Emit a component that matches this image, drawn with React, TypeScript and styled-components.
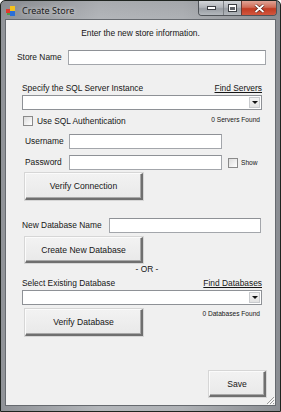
import React from 'react';
import styled, { createGlobalStyle } from 'styled-components';

const GlobalStyle = createGlobalStyle`
  html, body { margin: 0; padding: 0; background: #ffffff; }
  body { font-family: "Liberation Sans", Arial, sans-serif; }
  #root { width: 281px; height: 412px; }
`;

const Window = styled.div`
  width: 281px;
  height: 412px;
  box-sizing: border-box;
  display: flex;
  flex-direction: column;
  border: 1px solid #1f2420;
  border-radius: 5px 5px 0 0;
  padding: 0 4px 5px 4px;
  background: linear-gradient(180deg, rgba(0, 0, 0, 0.06) 0px, rgba(0, 0, 0, 0) 18px),
    linear-gradient(90deg, #8f9297 0%, #b3b6ba 35%, #aeb1b5 65%, #8a8d92 100%);
  overflow: hidden;
`;

const TitleBar = styled.div`
  height: 18px;
  display: flex;
  align-items: flex-start;
`;

const TitleIcon = styled.svg`
  width: 10px;
  height: 10px;
  margin: 5px 0 0 1px;
`;

const TitleText = styled.span`
  margin: 4px 0 0 6px;
  font-family: "Noto Sans", "Open Sans", sans-serif;
  font-size: 9px;
  line-height: 11px;
  color: #1a1a1a;
  text-shadow: 0 0 4px rgba(255, 255, 255, 0.8);
`;

const CaptionGroup = styled.div`
  margin-left: auto;
  margin-right: -1px;
  display: flex;
  height: 14px;
  border: 1px solid #4f5358;
  border-top: none;
  border-radius: 0 0 4px 4px;
  overflow: hidden;
`;

const CaptionButton = styled.div<{ $w: number; $close?: boolean }>`
  width: ${(p) => p.$w}px;
  height: 100%;
  display: flex;
  align-items: center;
  justify-content: center;
  box-sizing: border-box;
  border-left: ${(p) => (p.$close ? '1px solid #6b3a33' : '1px solid #7b7f84')};
  background: ${(p) =>
    p.$close
      ? 'linear-gradient(180deg, #e0a496 0%, #cf6b56 45%, #c13b22 55%, #d2573f 100%)'
      : 'linear-gradient(180deg, #d3d6da 0%, #b1b5ba 45%, #989da3 55%, #b4b8bd 100%)'};
  &:first-child { border-left: none; }
`;

const Client = styled.div`
  flex: 1;
  position: relative;
  display: flex;
  flex-direction: column;
  background: #f0f0f0;
  border: 1px solid #666a6f;
  padding: 0 13px 0 16px;
  color: #161616;
  font-size: 8.4px;
`;

const Header = styled.div`
  margin-top: 7px;
  height: 12px;
  line-height: 12px;
  text-align: center;
  margin-left: -16px;
  margin-right: -13px;
`;

const Row = styled.div<{ $mt: number; $ml?: number; $mr?: number; $h?: number }>`
  display: flex;
  align-items: center;
  margin-top: ${(p) => p.$mt}px;
  margin-left: ${(p) => p.$ml ?? 0}px;
  margin-right: ${(p) => p.$mr ?? 0}px;
  height: ${(p) => p.$h ?? 15}px;
`;

const Label = styled.span<{ $w?: number }>`
  ${(p) => (p.$w ? `width: ${p.$w}px; flex: none;` : '')}
  white-space: nowrap;
  line-height: 11px;
`;

const LinkText = styled.span`
  margin-left: auto;
  text-decoration: underline;
  line-height: 11px;
`;

const TextBox = styled.div<{ $w?: number }>`
  height: 15px;
  box-sizing: border-box;
  background: #ffffff;
  border: 1px solid #a3a6ab;
  border-top-color: #8e9196;
  ${(p) => (p.$w ? `width: ${p.$w}px; flex: none;` : 'flex: 1;')}
`;

const Combo = styled.div`
  flex: 1;
  height: 15px;
  box-sizing: border-box;
  background: #ffffff;
  border: 1px solid #8e9196;
  display: flex;
  justify-content: flex-end;
  padding: 1px;
`;

const ComboArrow = styled.div`
  width: 11px;
  box-sizing: border-box;
  border: 1px solid #c9cbce;
  background: linear-gradient(180deg, #f4f4f4, #e2e2e2);
  display: flex;
  align-items: center;
  justify-content: center;
  &::after {
    content: '';
    border-left: 3px solid transparent;
    border-right: 3px solid transparent;
    border-top: 3px solid #111;
  }
`;

const CheckBox = styled.span<{ $ml?: number }>`
  width: 10px;
  height: 10px;
  box-sizing: border-box;
  flex: none;
  margin-left: ${(p) => p.$ml ?? 0}px;
  border: 1px solid #8a8a8a;
  background: linear-gradient(135deg, #dcdcdc, #ffffff);
`;

const CheckLabel = styled.span`
  margin-left: 4px;
  white-space: nowrap;
  line-height: 11px;
`;

const Small = styled.span<{ $ml?: number }>`
  font-size: 6.6px;
  line-height: 9px;
  margin-left: ${(p) => p.$ml ?? 0}px;
  white-space: nowrap;
`;

const Found = styled(Small)`
  margin-left: auto;
  margin-right: 2px;
  align-self: flex-start;
`;

const Button = styled.div<{ $w: number; $h: number }>`
  width: ${(p) => p.$w}px;
  height: ${(p) => p.$h}px;
  flex: none;
  box-sizing: border-box;
  display: flex;
  align-items: center;
  justify-content: center;
  background: linear-gradient(180deg, #f2f2f2, #e9e9e9);
  border-top: 1px solid #fbfbfb;
  border-left: 1px solid #fbfbfb;
  border-right: 2px solid #6f6f6f;
  border-bottom: 2px solid #6f6f6f;
  box-shadow: inset -1px -1px 0 #a8a8a8, 0 0 0 1px #d6d6d6;
  font-size: 8.6px;
`;

const SaveRow = styled(Row)`
  justify-content: flex-end;
`;

const Or = styled.div`
  margin-top: 1px;
  height: 11px;
  line-height: 11px;
  text-align: center;
  padding-left: 10px;
`;

const Grip = styled.svg`
  position: absolute;
  right: 0;
  bottom: 0;
  width: 10px;
  height: 10px;
`;

export default function App() {
  return (
    <>
      <GlobalStyle />
      <Window>
        <TitleBar>
          <TitleIcon viewBox="0 0 10 10">
            <rect x="0" y="3" width="4" height="4" fill="#e0392b" />
            <rect x="4" y="0" width="5" height="5" fill="#f4c21c" />
            <rect x="4" y="5" width="5" height="5" fill="#2b6fd6" />
            <rect x="1" y="7" width="3" height="2" fill="#49a04a" />
          </TitleIcon>
          <TitleText>Create Store</TitleText>
          <CaptionGroup>
            <CaptionButton $w={24}>
              <svg width="9" height="4" viewBox="0 0 9 4">
                <rect x="0.5" y="0.5" width="8" height="3" fill="#fff" stroke="#3a3d42" />
              </svg>
            </CaptionButton>
            <CaptionButton $w={18}>
              <svg width="9" height="8" viewBox="0 0 9 8">
                <rect x="0.5" y="0.5" width="8" height="7" fill="#fff" stroke="#3a3d42" />
                <rect x="2" y="3" width="5" height="3" fill="#5e6166" />
              </svg>
            </CaptionButton>
            <CaptionButton $w={35} $close>
              <svg width="11" height="9" viewBox="0 0 11 9">
                <path d="M1.5 1 L9.5 8 M9.5 1 L1.5 8" stroke="#4a1a12" strokeWidth="3" />
                <path d="M1.5 1 L9.5 8 M9.5 1 L1.5 8" stroke="#ffffff" strokeWidth="1.8" />
              </svg>
            </CaptionButton>
          </CaptionGroup>
        </TitleBar>
        <Client>
          <Header>Enter the new store information.</Header>

          <Row $mt={11} $ml={-5} $mr={-4}>
            <Label $w={51}>Store Name</Label>
            <TextBox />
          </Row>

          <Row $mt={18} $h={11}>
            <Label>Specify the SQL Server Instance</Label>
            <LinkText>Find Servers</LinkText>
          </Row>
          <Row $mt={1}>
            <Combo>
              <ComboArrow />
            </Combo>
          </Row>

          <Row $mt={5} $ml={1} $h={12}>
            <CheckBox />
            <CheckLabel>Use SQL Authentication</CheckLabel>
            <Found>0 Servers Found</Found>
          </Row>

          <Row $mt={7} $ml={3}>
            <Label $w={44}>Username</Label>
            <TextBox $w={153} />
          </Row>
          <Row $mt={6} $ml={3}>
            <Label $w={44}>Password</Label>
            <TextBox $w={153} />
            <CheckBox $ml={6} />
            <Small $ml={3}>Show</Small>
          </Row>

          <Row $mt={3} $ml={3} $h={27}>
            <Button $w={118} $h={27}>Verify Connection</Button>
          </Row>

          <Row $mt={18} $mr={1}>
            <Label $w={87}>New Database Name</Label>
            <TextBox />
          </Row>

          <Row $mt={4} $ml={3} $h={26}>
            <Button $w={118} $h={26}>Create New Database</Button>
          </Row>

          <Or>- OR -</Or>

          <Row $mt={3} $h={11}>
            <Label>Select Existing Database</Label>
            <LinkText>Find Databases</LinkText>
          </Row>
          <Row $mt={1}>
            <Combo>
              <ComboArrow />
            </Combo>
          </Row>

          <Row $mt={4} $ml={3} $h={27}>
            <Button $w={118} $h={27}>Verify Database</Button>
            <Found>0 Databases Found</Found>
          </Row>

          <SaveRow $mt={35} $mr={-4} $h={26}>
            <Button $w={57} $h={26}>Save</Button>
          </SaveRow>

          <Grip viewBox="0 0 10 10">
            <path d="M9 2 L2 9 M9 5 L5 9 M9 8 L8 9" stroke="#9a9a9a" strokeWidth="1" />
            <path d="M10 3 L3 10 M10 6 L6 10" stroke="#ffffff" strokeWidth="1" />
          </Grip>
        </Client>
      </Window>
    </>
  );
}
